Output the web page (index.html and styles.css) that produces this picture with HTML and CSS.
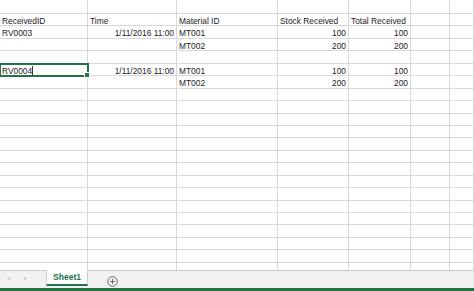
FILE: index.html
```html
<!DOCTYPE html>
<html lang="en">
<head>
    <meta charset="UTF-8">
    <title>Stock Received</title>
    <link rel="stylesheet" href="styles.css">
</head>
<body>
    <div class="workbook">
        <div class="sheet" id="sheet">
            <!-- cells are built below -->
        </div>

        <div class="tab-bar">
            <span class="nav-arrow">&#9666;</span>
            <span class="nav-arrow">&#9656;</span>
            <div class="sheet-tab">Sheet1</div>
            <div class="add-sheet">
                <svg width="11" height="11" viewBox="0 0 11 11">
                    <circle cx="5.5" cy="5.5" r="4.8" fill="none" stroke="#6b6b6b" stroke-width="1"/>
                    <path d="M5.5 3v5M3 5.5h5" stroke="#6b6b6b" stroke-width="1"/>
                </svg>
            </div>
        </div>
        <div class="status-bar"></div>
    </div>

    <script>
        // one entry per row, 7 columns; numbers and dates are right aligned
        const rows = [
            [],
            ['ReceivedID', 'Time', 'Material ID', 'Stock Received', 'Total Received'],
            ['RV0003', '1/11/2016 11:00', 'MT001', '100', '100'],
            ['', '', 'MT002', '200', '200'],
            [],
            ['RV0004', '1/11/2016 11:00', 'MT001', '100', '100'],
            ['', '', 'MT002', '200', '200']
        ];
        const rightCols = [1, 3, 4];
        const sheet = document.getElementById('sheet');

        for (let r = 0; r < 22; r++) {
            const data = rows[r] || [];
            for (let c = 0; c < 7; c++) {
                const cell = document.createElement('div');
                cell.className = 'cell';
                const text = data[c] || '';
                if (r > 1 && rightCols.includes(c)) cell.classList.add('num');
                if (r === 5 && c === 0) {
                    cell.classList.add('selected');
                    cell.innerHTML = `<span>${text}</span><i class="caret"></i><b class="handle"></b>`;
                } else {
                    cell.textContent = text;
                }
                sheet.appendChild(cell);
            }
        }
    </script>
</body>
</html>
```

FILE: styles.css
```css
body {
    margin: 0;
    padding: 0;
    background-color: #ffffff;
    font-family: "Liberation Sans", Arial, sans-serif;
    overflow: hidden;
}

.workbook {
    width: 474px;
    height: 291px;
    display: flex;
    flex-direction: column;
}

.sheet {
    height: 270px;
    overflow: hidden;
    display: grid;
    grid-template-columns: 88px 89px 101px 71px 62px 39px 1fr;
    grid-template-rows: 14px;
    grid-auto-rows: 12.45px;
    font-size: 8.4px;
    color: #222222;
}

.cell {
    box-sizing: border-box;
    border-right: 1px solid #d9d9d9;
    border-bottom: 1px solid #d9d9d9;
    padding: 1px 2px 0;
    line-height: 12px;
    white-space: nowrap;
    position: relative;
}
.cell.num {
    text-align: right;
}
.cell.selected {
    outline: 2px solid #217346;
    outline-offset: -1px;
    z-index: 1;
}
.caret {
    display: inline-block;
    width: 1px;
    height: 9px;
    background-color: #333;
    vertical-align: -1px;
}
.handle {
    position: absolute;
    right: -3px;
    bottom: -3px;
    width: 4px;
    height: 4px;
    background-color: #217346;
    border: 1px solid #fff;
}

.tab-bar {
    height: 17px;
    background-color: #f1f1f1;
    border-top: 1px solid #c8c8c8;
    display: flex;
    align-items: flex-start;
}
.nav-arrow {
    font-size: 6px;
    color: #c4c4c4;
    width: 17px;
    line-height: 15px;
    text-align: center;
}
.sheet-tab {
    margin-left: 12px;
    margin-top: -1px;
    width: 42px;
    height: 16px;
    box-sizing: border-box;
    background-color: #ffffff;
    border-left: 1px solid #cfcfcf;
    border-right: 1px solid #cfcfcf;
    border-bottom: 2px solid #217346;
    color: #217346;
    font-weight: bold;
    font-size: 8.5px;
    line-height: 15px;
    text-align: center;
}
.add-sheet {
    margin-left: 19px;
    margin-top: 2px;
    height: 11px;
}

.status-bar {
    height: 3px;
    background-color: #217346;
}
```
